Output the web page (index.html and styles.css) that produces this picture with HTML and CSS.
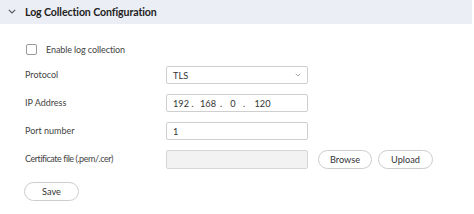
FILE: index.html
```html
<!DOCTYPE html>
<html>
<head>
<meta charset="utf-8">
<link rel="stylesheet" href="styles.css">
</head>
<body>
<div class="panel">
  <div class="panel-header">
    <svg class="chevron" width="8" height="5" viewBox="0 0 8 5"><path d="M0.8 0.8 L4 4 L7.2 0.8" fill="none" stroke="#555" stroke-width="1.1"/></svg>
    <span class="title">Log Collection Configuration</span>
  </div>
  <div class="form">
    <label class="check-row">
      <span class="checkbox"></span>
      <span class="check-label">Enable log collection</span>
    </label>
    <div class="row">
      <span class="label">Protocol</span>
      <div class="field select">
        <span>TLS</span>
        <svg class="caret" width="6" height="4" viewBox="0 0 6 4"><path d="M0.7 0.7 L3 3 L5.3 0.7" fill="none" stroke="#aaa" stroke-width="1"/></svg>
      </div>
    </div>
    <div class="row">
      <span class="label">IP Address</span>
      <div class="field ip">
        <span class="oct o1">192</span><span class="dot d1">.</span><span class="oct o2">168</span><span class="dot d2">.</span><span class="oct o3">0</span><span class="dot d3">.</span><span class="oct o4">120</span>
      </div>
    </div>
    <div class="row">
      <span class="label">Port number</span>
      <div class="field"><span>1</span></div>
    </div>
    <div class="row row-cert">
      <span class="label label-tight">Certificate file (.pem/.cer)</span>
      <div class="field disabled"></div>
      <div class="btns">
        <button class="btn btn-browse">Browse</button>
        <button class="btn btn-upload">Upload</button>
      </div>
    </div>
    <div class="save-row">
      <button class="btn btn-save">Save</button>
    </div>
  </div>
</div>
</body>
</html>
```
FILE: styles.css
```css
* { box-sizing: border-box; }
body {
  margin: 0;
  background: #fff;
  font-family: Lato, "Open Sans", sans-serif;
  color: #333;
  width: 474px;
}
.panel { width: 472px; }
.panel-header {
  height: 24px;
  background: #eceef5;
  display: flex;
  align-items: center;
  padding-left: 8px;
}
.chevron { margin-right: 9px; margin-top: -1px; }
.title {
  font-size: 10.6px;
  font-weight: 700;
  letter-spacing: -0.1px;
  color: #222;
}
.form {
  padding: 18px 0 0 25px;
}
.check-row {
  display: flex;
  align-items: center;
  height: 14px;
  margin-left: 1px;
}
.checkbox {
  width: 11px;
  height: 11px;
  border: 1px solid #9a9a9a;
  border-radius: 2px;
  background: #fff;
}
.check-label {
  font-size: 9px;
  letter-spacing: -0.1px;
  margin-left: 9px;
  color: #444;
}
.row {
  display: flex;
  align-items: center;
  height: 18px;
  margin-top: 10px;
  font-size: 9px;
}
.label {
  width: 141px;
  color: #444;
  margin-top: -2px;
  white-space: nowrap;
}
.label-tight { letter-spacing: -0.45px; }
.field {
  width: 142px;
  height: 18px;
  border: 1px solid #cfcfcf;
  border-radius: 2px;
  background: #fff;
  display: flex;
  align-items: center;
  padding-left: 6px;
  font-size: 9.2px;
  color: #333;
}
.select { justify-content: space-between; padding-right: 6px; }
.ip span { display: inline-block; text-align: center; }
.ip .o1 { width: 12px; }
.ip .d1 { width: 15px; }
.ip .o2 { width: 12px; }
.ip .d2 { width: 18px; }
.ip .o3 { width: 6px; }
.ip .d3 { width: 16px; }
.ip .o4 { width: 21px; }
.row-cert { height: 19px; }
.disabled { background: #f2f2f2; height: 19px; border-color: #d6d6d6; }
.btns {
  display: flex;
  gap: 6px;
  margin-left: 10px;
}
.btn {
  font-family: Lato, "Open Sans", sans-serif;
  font-size: 9.2px;
  color: #333;
  background: #fff;
  border: 1px solid #cdcdcd;
  border-radius: 10px;
  height: 19px;
  padding: 0;
}
.btn-browse { width: 54px; }
.btn-upload { width: 55px; }
.save-row { margin-top: 10px; margin-left: -1px; }
.btn-save { width: 55px; }
```
